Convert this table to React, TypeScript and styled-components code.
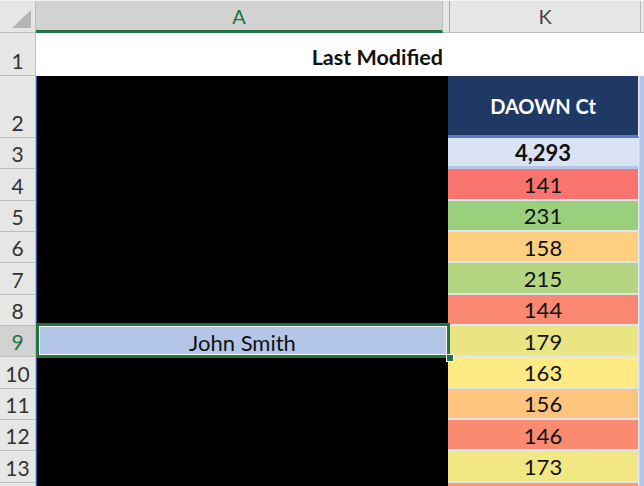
import React from "react";
import styled, { createGlobalStyle } from "styled-components";

const Global = createGlobalStyle`
  html, body { margin: 0; padding: 0; background: #ffffff; }
  body { width: 644px; height: 486px; overflow: hidden; }
`;

const FONT = `Lato, "Open Sans", "Liberation Sans", sans-serif`;

const Sheet = styled.div`
  width: 644px;
  height: 486px;
  overflow: hidden;
  background: #ffffff;
  font-family: ${FONT};
  font-size: 22px;
  color: #111;
  display: flex;
  flex-direction: column;
`;

const HeaderBar = styled.div`
  display: flex;
  height: 33px;
  flex: none;
  background: #e6e6e6;
  border-top: 1px solid #f3f3f3;
  box-sizing: border-box;
`;

const Corner = styled.div`
  width: 36px;
  flex: none;
  box-sizing: border-box;
  border-right: 1px solid #bdbdbd;
  border-bottom: 1px solid #bdbdbd;
  display: flex;
  align-items: flex-end;
  justify-content: flex-end;
  padding: 0 4px 4px 0;
`;

const ColHeader = styled.div<{ $w: number; $selected?: boolean }>`
  width: ${(p) => p.$w}px;
  flex: none;
  box-sizing: border-box;
  background: ${(p) => (p.$selected ? "#d2d2d2" : "#e6e6e6")};
  color: ${(p) => (p.$selected ? "#217346" : "#444444")};
  border-right: 1px solid #bdbdbd;
  border-bottom: ${(p) => (p.$selected ? "3px solid #217346" : "1px solid #bdbdbd")};
  display: flex;
  align-items: center;
  justify-content: center;
  font-size: 20px;
  padding-bottom: ${(p) => (p.$selected ? "0" : "2px")};
`;

const HiddenGap = styled.div`
  width: 7px;
  flex: none;
  box-sizing: border-box;
  background: #e6e6e6;
  border-right: 1px solid #a9a9a9;
  border-bottom: 1px solid #bdbdbd;
`;

const RestHeader = styled.div`
  flex: 1;
  background: #e6e6e6;
  border-bottom: 1px solid #bdbdbd;
`;

const Row = styled.div<{ $h: number }>`
  display: grid;
  grid-template-columns: 36px 412px 191px 1fr;
  height: ${(p) => p.$h}px;
  flex: none;
`;

const RowHeader = styled.div<{ $selected?: boolean }>`
  box-sizing: border-box;
  background: ${(p) => (p.$selected ? "#d2d2d2" : "#e6e6e6")};
  color: ${(p) => (p.$selected ? "#217346" : "#333333")};
  border-right: 1px solid #bdbdbd;
  border-bottom: 1px solid #bdbdbd;
  display: flex;
  align-items: flex-end;
  justify-content: center;
  padding-bottom: 1px;
  font-size: 21px;
  line-height: 26px;
`;

type Variant = "white" | "black" | "selected";

const NameCell = styled.div<{ $variant: Variant }>`
  position: relative;
  box-sizing: border-box;
  background: ${(p) =>
    p.$variant === "black" ? "#000000" : p.$variant === "selected" ? "#b4c6e7" : "#ffffff"};
  border-left: 1px solid ${(p) => (p.$variant === "black" ? "#3b5c9a" : "transparent")};
  display: flex;
  align-items: ${(p) => (p.$variant === "white" ? "flex-end" : "center")};
  justify-content: ${(p) => (p.$variant === "white" ? "flex-end" : "center")};
  padding: ${(p) => (p.$variant === "white" ? "0 5px 6px 0" : "2px 0 0 0")};
  line-height: 26px;
  z-index: ${(p) => (p.$variant === "selected" ? 3 : "auto")};
`;

const Title = styled.span`
  font-weight: 700;
  font-size: 21.5px;
  color: #111;
`;

const Selection = styled.div`
  position: absolute;
  left: -1px;
  top: -3px;
  right: -2px;
  bottom: -1px;
  border: 3px solid #217346;
  box-shadow: inset 0 0 0 1px #ffffff;
  pointer-events: none;
`;

const FillHandle = styled.div`
  position: absolute;
  right: -6px;
  bottom: -5px;
  width: 6px;
  height: 6px;
  background: #217346;
  border: 1px solid #ffffff;
`;

type Kind = "blank" | "head" | "total" | "value";

const ValueCell = styled.div<{ $kind: Kind; $bg?: string }>`
  box-sizing: border-box;
  display: flex;
  align-items: ${(p) => (p.$kind === "blank" ? "flex-end" : "center")};
  justify-content: center;
  line-height: 26px;
  background: ${(p) =>
    p.$kind === "head"
      ? "#203864"
      : p.$kind === "total"
      ? "#dae3f3"
      : p.$kind === "value"
      ? p.$bg
      : "#ffffff"};
  color: ${(p) => (p.$kind === "head" ? "#ffffff" : "#111111")};
  font-weight: ${(p) => (p.$kind === "head" || p.$kind === "total" ? 700 : 400)};
  font-size: ${(p) => (p.$kind === "head" ? "20px" : "22px")};
  border-bottom: ${(p) =>
    p.$kind === "head"
      ? "3px solid #5a7dc3"
      : p.$kind === "total"
      ? "3px solid #b4c6e7"
      : p.$kind === "value"
      ? "2px solid #dde3f0"
      : "none"};
  border-right: ${(p) => (p.$kind === "blank" ? "none" : "1px solid #e4e9f3")};
  padding-top: ${(p) => (p.$kind === "value" || p.$kind === "total" ? "2px" : "0")};
`;

const NextCol = styled.div<{ $blank?: boolean }>`
  background: ${(p) => (p.$blank ? "#ffffff" : "#b4c6e7")};
  border-left: 1px solid ${(p) => (p.$blank ? "#ffffff" : "#c9d5ec")};
`;

const CornerTriangle = () => (
  <svg width="19" height="18" viewBox="0 0 19 18">
    <polygon points="0,18 19,18 19,0" fill="#b5b5b5" />
  </svg>
);

const ROW_H = 31.33;

const values: { n: number; v: string; bg: string }[] = [
  { n: 4, v: "141", bg: "#f9746e" },
  { n: 5, v: "231", bg: "#9acf7c" },
  { n: 6, v: "158", bg: "#fecf7f" },
  { n: 7, v: "215", bg: "#b5d680" },
  { n: 8, v: "144", bg: "#fa8770" },
  { n: 9, v: "179", bg: "#e9e583" },
  { n: 10, v: "163", bg: "#ffea84" },
  { n: 11, v: "156", bg: "#fcc47c" },
  { n: 12, v: "146", bg: "#fa8b71" },
  { n: 13, v: "173", bg: "#f1e783" },
];

export default function App() {
  return (
    <>
      <Global />
      <Sheet>
        <HeaderBar>
          <Corner>
            <CornerTriangle />
          </Corner>
          <ColHeader $w={407} $selected>
            A
          </ColHeader>
          <HiddenGap />
          <ColHeader $w={191}>K</ColHeader>
          <RestHeader />
        </HeaderBar>

        <Row $h={43}>
          <RowHeader>1</RowHeader>
          <NameCell $variant="white">
            <Title>Last Modified</Title>
          </NameCell>
          <ValueCell $kind="blank" />
          <NextCol $blank />
        </Row>

        <Row $h={62}>
          <RowHeader>2</RowHeader>
          <NameCell $variant="black" />
          <ValueCell $kind="head">DAOWN Ct</ValueCell>
          <NextCol />
        </Row>

        <Row $h={ROW_H}>
          <RowHeader>3</RowHeader>
          <NameCell $variant="black" />
          <ValueCell $kind="total">4,293</ValueCell>
          <NextCol />
        </Row>

        {values.map((r) => (
          <Row key={r.n} $h={ROW_H}>
            <RowHeader $selected={r.n === 9}>{r.n}</RowHeader>
            {r.n === 9 ? (
              <NameCell $variant="selected">
                John Smith
                <Selection />
                <FillHandle />
              </NameCell>
            ) : (
              <NameCell $variant="black" />
            )}
            <ValueCell $kind="value" $bg={r.bg}>
              {r.v}
            </ValueCell>
            <NextCol />
          </Row>
        ))}

        <Row $h={ROW_H}>
          <RowHeader />
          <NameCell $variant="black" />
          <ValueCell $kind="value" $bg="#fa9b74" />
          <NextCol />
        </Row>
      </Sheet>
    </>
  );
}
